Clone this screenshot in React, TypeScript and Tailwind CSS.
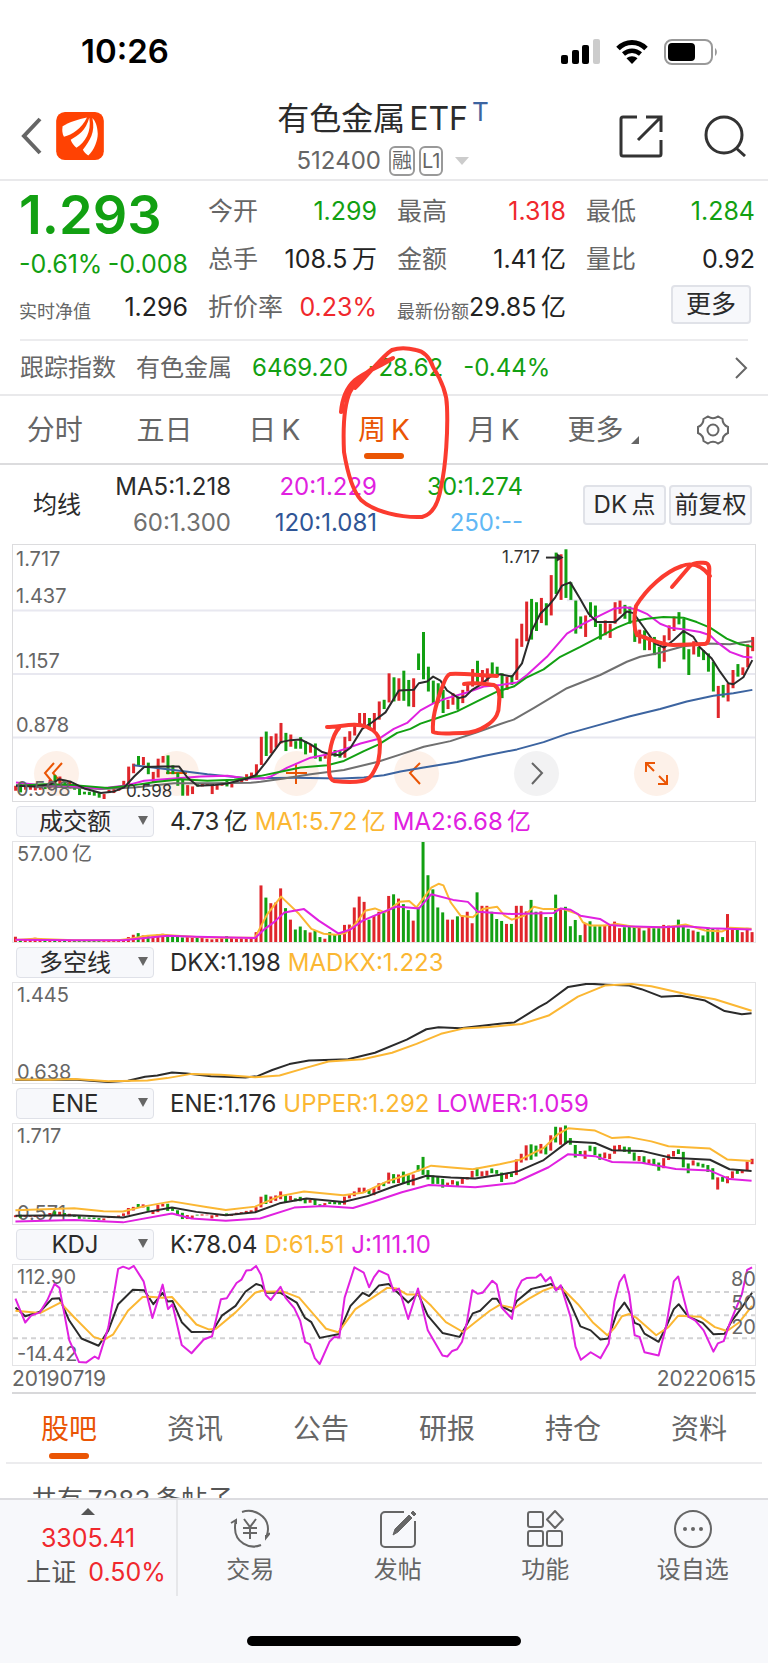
import type { ReactNode } from "react";
import clsx from "clsx";

const RED = "#e0262b";
const GREEN = "#12a012";
const BLACK = "#2b2b2b";
const YELLOW = "#fbb733";
const MAGENTA = "#e021e0";
const BLUE = "#3c64a0";
const GRAY = "#707070";

// One entry per week: direction, top and bottom of the bar.
const candles = `
r740-755 g735-760 r740-752 r738-752 r740-754 r738-752 g738-750 r722-748 g708-740 r712-738
g722-742 r728-748 g738-752 g745-768 g758-766 g758-768 g758-770 g762-776 r765-780 r752-762
r750-762 r742-755 r725-745 r682-735 r673-702 g650-680 r653-678 g670-705 r698-730 r658-715
r650-670 g648-705 g678-705 g700-740 g720-770 r738-770 r742-765 g735-742 r733-742 r735-740
r740-765 r735-752 r730-740 g725-742 r730-745 r720-730 r715-730 r705-725 r700-715 r675-710
r592-677 g576-650 r590-642 r582-625 r550-612 g580-635 r585-622 g605-628 g593-628 g605-645
r615-640 g612-658 g652-666 r643-658 g635-650 g632-652 g635-655 r592-655 r575-605 r550-588
r520-560 r520-560 g535-570 r520-580 r485-540 g480-508 r400-488 g412-485 r415-483 g392-483
g420-500 r415-502 g340-390 g275-418 g380-455 g422-490 g430-490 g450-520 r480-508 r460-495
g470-510 r450-490 r435-455 r387-440 g362-430 r390-430 r385-425 g367-405 g380-410 g400-475
r410-450 g405-435 r295-420 r250-320 r183-303 g175-298 g185-272 r172-248 g188-255 r103-225
g35-160 r40-178 g25-172 g125-178 g180-280 g228-265 r225-290 g185-230 g195-260 g250-298
r240-285 r250-293 r185-250 r180-220 g193-235 g198-250 g240-305 r268-310 g270-330 r295-330
g290-345 g320-385 r285-365 r255-300 r228-272 g215-252 g235-358 g327-405 r303-343 g320-350
g330-360 g340-395 g365-455 r438-535 g435-473 r430-485 r390-445 g372-410 r382-405 r312-382
r290-333`
  .trim()
  .split(/\s+/)
  .map((c) => {
    const [top, bottom] = c.slice(1).split("-").map(Number);
    return { color: c[0] === "r" ? RED : GREEN, top, bottom };
  });

const volumes = [
  414, 424, 423, 424, 417, 423, 423, 424, 424, 425, 427, 427, 427, 427, 427, 427, 427, 427, 427,
  427, 427, 426, 425, 415, 408, 403, 410, 412, 413, 406, 405, 411, 412, 414, 416, 415, 417, 417,
  418, 420, 422, 421, 418, 412, 418, 420, 419, 420, 418, 400, 258, 295, 312, 310, 267, 327, 362,
  392, 383, 394, 401, 395, 415, 420, 400, 408, 408, 378, 377, 325, 292, 308, 362, 350, 338, 342,
  290, 285, 298, 315, 333, 365, 325, 126, 227, 270, 325, 340, 362, 362, 352, 353, 338, 373, 279,
  320, 320, 338, 360, 366, 375, 375, 320, 320, 337, 302, 338, 337, 354, 354, 286, 330, 323, 382,
  363, 409, 373, 367, 382, 382, 378, 380, 368, 388, 385, 383, 384, 385, 395, 385, 388, 388, 378,
  380, 381, 362, 378, 390, 395, 399, 410, 388, 388, 392, 415, 345, 392, 392, 400, 387, 400,
];

type Series = { color: string; points: string };

const priceLines: Series[] = [
  {
    color: BLUE,
    points:
      "398,678 500,690 620,705 740,717 880,716 1020,718 1090,715 1150,708 1200,697 1270,685 1370,668 1450,650 1550,630 1630,608 1700,583 1800,555 1890,530 1980,508 2060,485 2140,468 2200,460 2257,450",
  },
  {
    color: GRAY,
    points:
      "45,738 300,750 400,745 520,732 640,732 750,731 780,728 850,718 930,705 1030,692 1080,680 1130,668 1210,642 1270,622 1350,605 1430,578 1500,553 1540,540 1600,505 1700,445 1800,405 1880,365 1920,350 1980,338 2050,318 2120,310 2190,312 2257,302",
  },
  {
    color: MAGENTA,
    points:
      "45,730 120,738 200,740 300,748 380,738 430,725 520,718 600,712 680,710 740,718 790,718 810,712 860,685 930,655 980,645 1030,630 1080,612 1135,598 1180,568 1220,550 1260,512 1300,490 1340,475 1400,458 1450,440 1500,435 1550,428 1580,405 1640,350 1700,280 1750,250 1800,225 1840,205 1875,200 1910,207 1940,220 1980,250 2010,262 2060,268 2100,275 2130,285 2150,305 2190,335 2230,350 2257,352",
  },
  {
    color: GREEN,
    points:
      "45,740 130,735 220,738 320,747 400,738 470,728 540,720 620,725 700,722 780,710 850,695 900,685 980,678 1030,665 1090,635 1135,615 1190,580 1230,568 1260,552 1320,532 1370,515 1430,485 1490,455 1540,440 1580,412 1630,388 1680,350 1740,320 1800,288 1850,262 1890,245 1940,235 1990,230 2050,232 2090,245 2130,262 2180,295 2220,312 2257,320",
  },
  {
    color: BLACK,
    points:
      "45,740 100,742 150,735 175,720 210,728 250,748 300,762 340,757 370,745 400,712 430,683 485,682 535,682 560,715 590,740 640,738 680,733 740,718 765,708 795,670 840,608 870,602 900,600 930,615 965,638 990,645 1018,648 1050,625 1085,568 1115,548 1155,518 1195,452 1240,450 1255,430 1280,425 1298,410 1320,422 1340,452 1375,475 1395,470 1415,450 1440,435 1470,410 1500,403 1535,410 1565,370 1595,270 1620,220 1645,195 1665,170 1685,135 1710,125 1740,175 1765,220 1790,245 1845,245 1880,213 1900,218 1930,260 1965,310 1992,322 2020,300 2050,272 2080,290 2100,322 2135,355 2160,395 2185,430 2200,433 2230,412 2257,360",
  },
];

const volumeLines: Series[] = [
  {
    color: YELLOW,
    points:
      "30,424 68,420 150,425 240,425 265,420 300,411 330,408 400,415 450,417 520,416 545,345 573,292 610,345 635,390 660,405 685,408 705,403 725,375 745,335 765,328 785,340 800,325 815,308 835,305 850,325 865,295 880,265 895,253 905,258 920,310 940,350 965,355 985,330 1015,323 1030,350 1045,362 1070,350 1090,323 1110,330 1150,330 1180,345 1190,370 1205,380 1235,380 1260,375 1300,385 1360,385 1400,377 1440,395 1475,398 1490,387 1535,390",
  },
  {
    color: MAGENTA,
    points:
      "30,423 150,425 250,425 340,411 400,414 520,418 540,390 560,368 580,340 620,330 650,365 690,404 715,392 740,365 775,343 810,322 855,328 880,285 925,302 955,308 975,338 1045,345 1130,342 1145,328 1165,332 1185,350 1225,360 1245,378 1280,382 1350,385 1400,382 1450,388 1535,392",
  },
];

const dkxLines: Series[] = [
  {
    color: BLACK,
    points:
      "30,423 150,422 220,430 260,426 295,414 320,410 350,401 380,404 430,412 500,416 525,412 555,393 590,375 630,364 710,360 765,340 830,300 870,268 895,262 940,265 1020,251 1050,247 1100,200 1115,188 1160,138 1200,128 1240,131 1285,134 1310,145 1350,168 1390,165 1440,180 1480,212 1515,222 1535,219",
  },
  {
    color: YELLOW,
    points:
      "30,422 100,423 150,421 220,428 300,425 340,418 390,405 450,408 520,415 570,410 620,388 670,367 740,360 800,340 850,313 900,282 945,266 1000,261 1065,252 1120,226 1180,168 1235,134 1290,129 1330,136 1400,160 1460,176 1535,211",
  },
];

const eneLines: Series[] = [
  {
    color: YELLOW,
    points:
      "30,393 150,387 210,396 250,397 290,382 350,366 420,383 460,392 520,382 570,350 620,336 700,347 740,340 790,305 840,280 880,257 915,262 965,268 1020,253 1060,240 1110,203 1140,160 1160,143 1215,150 1250,173 1285,170 1330,183 1365,198 1450,205 1485,238 1535,243",
  },
  {
    color: BLACK,
    points:
      "30,410 150,408 250,415 300,398 350,385 400,398 460,408 520,399 570,372 625,357 700,368 750,350 800,322 870,288 920,293 970,296 1020,285 1060,273 1110,240 1160,183 1215,188 1250,210 1310,212 1370,233 1450,239 1490,268 1535,273",
  },
  {
    color: MAGENTA,
    points:
      "30,427 150,423 250,430 350,403 390,418 460,425 530,418 600,385 660,380 720,386 760,368 820,338 875,316 970,323 1050,310 1120,262 1160,222 1215,228 1250,246 1310,248 1380,267 1450,272 1490,298 1535,303",
  },
];

const kdjLines: Series[] = [
  {
    color: BLACK,
    points:
      "30,230 50,257 80,243 105,203 120,202 140,270 165,325 200,347 220,300 240,220 270,176 293,177 312,220 331,185 341,212 351,210 370,275 390,305 432,304 452,255 480,225 500,182 522,158 533,163 542,185 572,185 605,215 622,262 635,275 652,323 690,312 715,225 740,185 753,195 773,163 793,158 833,215 853,187 873,255 903,308 938,320 950,290 965,248 980,240 1005,203 1014,203 1025,227 1045,243 1055,210 1085,173 1115,163 1125,158 1135,175 1147,168 1165,220 1185,288 1206,300 1226,328 1242,325 1260,245 1275,215 1288,245 1296,277 1306,283 1316,310 1345,335 1360,290 1376,235 1386,220 1405,257 1435,277 1457,312 1480,310 1495,270 1515,230 1536,185",
  },
  {
    color: YELLOW,
    points:
      "30,240 80,247 105,228 122,215 150,260 190,320 210,330 230,312 260,240 290,198 305,197 330,200 350,198 375,240 400,282 425,297 440,295 480,245 520,185 535,178 545,182 575,180 610,200 645,260 665,295 690,306 725,235 755,205 790,170 810,172 830,190 855,190 880,225 910,275 945,305 970,275 1000,240 1020,222 1050,232 1080,203 1110,178 1130,167 1150,175 1180,220 1210,275 1240,315 1255,292 1270,257 1285,250 1300,262 1340,315 1365,290 1385,255 1430,258 1460,290 1485,302 1510,275 1536,225",
  },
  {
    color: MAGENTA,
    points:
      "30,203 50,276 62,255 80,245 95,208 110,158 120,170 140,330 160,397 175,398 192,380 200,387 220,290 240,112 250,105 262,112 272,103 292,150 310,262 331,160 342,235 351,220 370,345 390,370 415,328 432,318 450,205 462,202 482,155 492,145 502,117 512,115 522,103 532,130 542,192 552,207 572,167 582,200 600,232 612,270 622,335 632,343 642,385 652,403 672,335 682,320 692,322 703,200 723,107 742,123 753,168 763,137 773,117 792,130 803,180 814,172 833,265 853,172 873,300 903,377 913,380 923,363 933,358 943,335 953,275 964,177 975,188 985,185 1005,148 1014,160 1024,230 1045,265 1055,177 1065,148 1075,140 1095,138 1104,128 1114,150 1124,137 1135,178 1145,162 1165,260 1175,350 1186,390 1206,367 1226,385 1243,340 1255,210 1265,152 1275,130 1285,190 1296,315 1306,320 1316,367 1345,377 1360,290 1376,150 1385,135 1396,200 1406,258 1420,270 1437,300 1457,365 1466,340 1478,333 1490,280 1515,190 1526,115 1536,107",
  },
];

function Lines({ series }: { series: Series[] }) {
  return (
    <>
      {series.map((s) => (
        <polyline
          key={s.color}
          points={s.points}
          fill="none"
          stroke={s.color}
          strokeWidth={2}
          strokeLinejoin="round"
          vectorEffect="non-scaling-stroke"
        />
      ))}
    </>
  );
}

function Bar({ x, top, bottom, color }: { x: number; top: number; bottom: number; color: string }) {
  return (
    <line
      x1={x}
      x2={x}
      y1={top}
      y2={bottom}
      stroke={color}
      strokeWidth={3}
      vectorEffect="non-scaling-stroke"
    />
  );
}

function Panel({
  name,
  options,
  values,
  viewBox,
  top,
  bottom,
  children,
}: {
  name: string;
  options: string[];
  values: { text: string; className: string }[];
  viewBox: string;
  top: string;
  bottom?: string;
  children: ReactNode;
}) {
  return (
    <section className="px-3">
      <div className="flex h-[39px] items-center pl-1">
        <div className="relative">
          <select
            aria-label={name}
            defaultValue={options[0]}
            className="block h-[31px] w-[138px] appearance-none rounded border border-[#dfe1e8] bg-[#f7f8fb] pr-5 text-center text-[24px] leading-[28px] text-[#2b2b2b] [text-align-last:center]"
          >
            {options.map((o) => (
              <option key={o}>{o}</option>
            ))}
          </select>
          <svg viewBox="0 0 10 9" className="pointer-events-none absolute right-[6px] top-[10px] h-[9px] w-[10px]">
            <path d="M0 0h10L5 9z" fill="#666" />
          </svg>
        </div>
        <p className="flex gap-[7px] pl-4 text-[24px] leading-[30px] whitespace-nowrap">
          {values.map((v) => (
            <span key={v.text} className={v.className}>
              {v.text}
            </span>
          ))}
        </p>
      </div>
      <div className="relative h-[102px] border border-[#e4e4e6]">
        <span className="absolute left-1 top-0 text-[20px] leading-[24px] text-[#666]">{top}</span>
        {bottom && (
          <span className="absolute bottom-0 left-1 text-[20px] leading-[22px] text-[#666]">{bottom}</span>
        )}
        <svg viewBox={viewBox} preserveAspectRatio="none" className="relative block h-full w-full">
          {children}
        </svg>
      </div>
    </section>
  );
}

function Quote({
  label,
  value,
  color = "text-[#222]",
  small = false,
}: {
  label: string;
  value: string;
  color?: string;
  small?: boolean;
}) {
  return (
    <div className="flex h-12 items-center justify-between whitespace-nowrap">
      <dt className={clsx("text-[#666]", small ? "pt-[6px] text-[18px]" : "text-[25px]")}>{label}</dt>
      <dd className={clsx("text-[25px]", color)}>{value}</dd>
    </div>
  );
}

function StatusBar() {
  return (
    <div className="flex h-24 items-center justify-between pl-[81px] pr-[50px] pt-[7px]">
      <span className="text-[33px] font-semibold text-black">10:26</span>
      <div className="flex items-center gap-[15px]">
        <svg viewBox="0 0 39 25" className="h-[25px] w-[39px]">
          <rect x="0" y="16" width="7" height="9" rx="2" />
          <rect x="11" y="11" width="7" height="14" rx="2" />
          <rect x="21" y="6" width="7" height="19" rx="2" />
          <rect x="32" y="0" width="7" height="25" rx="2" fill="#ccc" />
        </svg>
        <svg viewBox="0 0 34 25" className="h-[25px] w-[34px]">
          <path d="M3 9.500C11 1.500 23 1.500 31 9.500" fill="none" stroke="#000" strokeWidth="5" />
          <path d="M8.500 15C13.500 10.500 20.500 10.500 25.500 15" fill="none" stroke="#000" strokeWidth="4.500" />
          <path d="M17 25L11.500 19.300C14.500 16.500 19.500 16.500 22.500 19.300z" />
        </svg>
        <svg viewBox="0 0 54 26" className="h-[26px] w-[54px]">
          <rect x="1" y="1" width="47" height="24" rx="7" fill="none" stroke="#999" strokeWidth="2" />
          <rect x="4" y="4" width="27" height="18" rx="4" />
          <path d="M51 9c2.500 1.500 2.500 6.500 0 8z" fill="#999" />
        </svg>
      </div>
    </div>
  );
}

function Header() {
  return (
    <header className="grid h-[85px] grid-cols-[1fr_auto_1fr] items-center border-b-2 border-[#e9e9eb] pl-5 pr-[22px]">
      <div className="flex items-center gap-[14px] pb-1">
        <button aria-label="返回">
          <svg viewBox="0 0 22 38" className="h-[38px] w-[22px]" fill="none" stroke="#666" strokeWidth="4">
            <path d="M20 2L4 19l16 17" />
          </svg>
        </button>
        <svg viewBox="0 0 141 142" className="h-12 w-12">
          <rect width="141" height="142" rx="26" fill="#ff4203" />
          <g fill="#fff">
            <path d="M91 16C65 22 40 28 19 42c-2 12-1 22 4 31 24-7 52-23 68-57z" />
            <path d="M98 17C88 54 65 70 43 82c3 9 9 17 17 24 26-17 45-47 38-89z" />
            <path d="M107 18c10 42-8 68-28 94 4 7 9 13 16 17 18-18 28-45 28-65-1-22-7-38-16-46z" />
          </g>
        </svg>
      </div>
      <div className="flex flex-col items-center">
        <h1 className="flex items-start gap-1 text-[32px] leading-[42px] text-[#2b2b2b]">
          <span>有色金属</span>
          <span>
            ETF
          </span>
          <sup className="top-0 text-[26px] leading-[28px] text-[#3c64a0]">T</sup>
        </h1>
        <button className="mt-1 flex items-center gap-1 text-[#666]">
          <span className="text-[24px] leading-[34px]">512400</span>
          <span className="ml-1 h-[30px] rounded-md border-2 border-[#999] px-px text-[20px] leading-[26px]">融</span>
          <span className="h-[30px] rounded-md border-2 border-[#999] px-px text-[20px] leading-[26px]">L1</span>
          <svg viewBox="0 0 14 8" className="ml-2 h-2 w-[14px]">
            <path d="M0 0h14L7 8z" fill="#ccc" />
          </svg>
        </button>
      </div>
      <div className="flex items-center justify-end gap-[41px] pb-1">
        <button aria-label="分享">
          <svg viewBox="0 0 44 44" className="h-11 w-11" fill="none" stroke="#333" strokeWidth="3">
            <path d="M18 3H4a2 2 0 0 0-2 2v35a2 2 0 0 0 2 2h36a2 2 0 0 0 2-2V26M27 3h15v15M41 4L19 26" />
          </svg>
        </button>
        <button aria-label="搜索">
          <svg viewBox="0 0 42 42" className="h-[42px] w-[42px]" fill="none" stroke="#333" strokeWidth="3">
            <circle cx="20" cy="20" r="18" />
            <path d="M32 33l9 8" />
          </svg>
        </button>
      </div>
    </header>
  );
}

function Quotes() {
  return (
    <section className="border-b-2 border-[#e9e9eb]">
      <dl className="grid grid-cols-4 gap-x-5 pb-[7px] pl-[19px] pr-[13px] pt-[7px]">
        <div>
          <div className="flex h-[52px] items-center text-[54px] font-semibold text-[#12a012]">1.293</div>
          <div className="flex h-11 items-center justify-between pt-[6px] text-[25px] whitespace-nowrap text-[#12a012]">
            <span>-0.61%</span>
            <span>-0.008</span>
          </div>
          <Quote label="实时净值" value="1.296" small />
        </div>
        <div>
          <Quote label="今开" value="1.299" color="text-[#12a012]" />
          <Quote label="总手" value={"108.5\u2009万"} />
          <Quote label="折价率" value="0.23%" color="text-[#f0282d]" />
        </div>
        <div>
          <Quote label="最高" value="1.318" color="text-[#f0282d]" />
          <Quote label="金额" value={"1.41\u2009亿"} />
          <Quote label="最新份额" value={"29.85\u2009亿"} small />
        </div>
        <div>
          <Quote label="最低" value="1.284" color="text-[#12a012]" />
          <Quote label="量比" value="0.92" />
          <div className="flex h-12 items-center justify-end pb-2 pr-1">
            <button className="h-[39px] w-20 rounded border-2 border-[#e0e2e8] bg-[#f7f8fb] text-[25px] leading-[34px] text-[#2b2b2b]">
              更多
            </button>
          </div>
        </div>
      </dl>
      <a
        href="#index"
        className="mx-5 flex h-[55px] items-center border-t-2 border-[#ececee] text-[24px] whitespace-nowrap text-[#12a012]"
      >
        <span className="text-[#666]">跟踪指数</span>
        <span className="ml-5 text-[#666]">有色金属</span>
        <span className="ml-5">6469.20</span>
        <span className="ml-5">-28.62</span>
        <span className="ml-5">-0.44%</span>
        <svg viewBox="0 0 14 22" className="ml-auto h-[22px] w-[14px]" fill="none" stroke="#666" strokeWidth="2">
          <path d="M2 1l10 10L2 21" />
        </svg>
      </a>
    </section>
  );
}

function PeriodTabs() {
  const active = "周\u2009K";

  return (
    <nav className="grid h-[69px] grid-cols-7 border-b-2 border-[#dcdcde] text-[28px] text-[#666]">
      {["分时", "五日", "日\u2009K", active, "月\u2009K"].map((t) => (
        <button key={t} className={clsx("relative", t === active && "text-[#ea5504]")}>
          {t}
          {t === active && (
            <span className="absolute bottom-1 left-1/2 h-[6px] w-10 -translate-x-1/2 rounded-full bg-[#ea5504]" />
          )}
        </button>
      ))}
      <button className="flex items-center justify-center gap-2">
        更多
        <svg viewBox="0 0 8 8" className="mt-5 h-2 w-2">
          <path d="M8 0v8H0z" fill="#666" />
        </svg>
      </button>
      <button aria-label="设置" className="flex items-center justify-center">
        <svg viewBox="0 0 32 32" className="h-8 w-8" fill="none" stroke="#666" strokeWidth="2">
          <path d="M11 2.500C14 4.500 18 4.500 21 2.500L25.500 5C25.500 9 27.500 11.500 31 13V19C27.500 20.500 25.500 23 25.500 27L21 29.500C18 27.500 14 27.500 11 29.500L6.500 27C6.500 23 4.500 20.500 1 19V13C4.500 11.500 6.500 9 6.500 5z" />
          <circle cx="16" cy="16" r="5.500" />
        </svg>
      </button>
    </nav>
  );
}

function Averages() {
  return (
    <section className="flex h-[79px] items-center pl-[33px] pr-4 text-[24px] text-[#2b2b2b]">
      <span>均线</span>
      <div className="ml-1 grid grid-cols-[146px_146px_146px] text-right leading-9">
        <span>MA5:1.218</span>
        <span className="text-[#e021e0]">20:1.229</span>
        <span className="text-[#12a012]">30:1.274</span>
        <span className="text-[#707070]">60:1.300</span>
        <span className="text-[#2f5596]">120:1.081</span>
        <span className="text-[#62b8f5]">250:--</span>
      </div>
      <div className="ml-auto flex gap-[3px] leading-[34px] whitespace-nowrap">
        <button className="h-10 w-[83px] rounded border-2 border-[#e0e2e8] bg-[#f7f8fb]">{"DK\u2009点"}</button>
        <button className="h-10 w-[83px] rounded border-2 border-[#e0e2e8] bg-[#f7f8fb]">前复权</button>
      </div>
    </section>
  );
}

const chartButtons = [
  { label: "最早", d: "M20 12L11 22l9 11M28 12L19 22l9 11" },
  { label: "缩小", d: "M12 22h21" },
  { label: "放大", d: "M12 22h21M22 12v21" },
  { label: "向左", d: "M26 12L16 22l10 11" },
  { label: "向右", d: "M18 12l10 10L18 33" },
  { label: "全屏", d: "M12 21v-9h9M12 12l8 8M33 24v9h-9M33 33l-8-8" },
];

function PriceChart() {
  return (
    <section className="relative mx-3 h-[258px] border border-[#dcdcde]">
      <div className="absolute bottom-[5px] left-[21px] flex gap-[75px]">
        {chartButtons.map((b) => (
          <button
            key={b.label}
            aria-label={b.label}
            className={clsx("rounded-full", b.label === "向右" ? "bg-[#f2f2f3]" : "bg-[#fdf1e9]")}
          >
            <svg
              viewBox="0 0 45 45"
              className="h-[45px] w-[45px]"
              fill="none"
              stroke={b.label === "向右" ? "#666" : "#ea5504"}
              strokeWidth="2"
            >
              <path d={b.d} />
            </svg>
          </button>
        ))}
      </div>
      <svg
        viewBox="36 12 2229 774"
        preserveAspectRatio="none"
        className="pointer-events-none relative block h-full w-full"
      >
        <path
          d="M36 210H2265M36 402H2265M36 594H2265M1700 179H2265"
          stroke="#e8e8f0"
          strokeWidth={2}
          vectorEffect="non-scaling-stroke"
        />
        {candles.map((c, i) => (
          <Bar key={i} x={44 + i * 14.76} {...c} />
        ))}
        <Lines series={priceLines} />
        <path d="M1637 50H1680" stroke={BLACK} strokeWidth={6} />
        <path d="M1670 38l20 12-20 12z" fill={BLACK} />
      </svg>
      <div className="pointer-events-none absolute inset-0 text-[20px] leading-6 text-[#666]">
        <span className="absolute left-[3px] top-[2px]">1.717</span>
        <span className="absolute left-[3px] top-[39px]">1.437</span>
        <span className="absolute left-[3px] top-[104px]">1.157</span>
        <span className="absolute left-[3px] top-[168px]">0.878</span>
        <span className="absolute bottom-0 left-[3px]">0.598</span>
        <span className="absolute bottom-0 left-[113px] text-[17px] leading-5 text-[#333]">0.598</span>
        <span className="absolute right-[29%] top-0 text-[17px] text-[#333]">1.717</span>
      </div>
    </section>
  );
}

function InfoTabs() {
  return (
    <nav className="mx-[6px] grid h-[70px] grid-cols-6 border-b-2 border-[#ececee] text-[28px] text-[#666]">
      {["股吧", "资讯", "公告", "研报", "持仓", "资料"].map((t, i) => (
        <button key={t} className={clsx("relative pt-[2px]", i === 0 && "text-[#ea5504]")}>
          {t}
          {i === 0 && (
            <span className="absolute bottom-[3px] left-1/2 h-[6px] w-10 -translate-x-1/2 rounded-full bg-[#ea5504]" />
          )}
        </button>
      ))}
    </nav>
  );
}

const actions = [
  {
    label: "交易",
    icon: (
      <>
        <path d="M12 3C24-1 38 7 38 20c0 4-1 6-2 9M40 24l-4 5v-3M31 36C19 41 5 33 5 19c0-3 0-5 1-8M1 14l5-3v4" />
        <path d="M14 10l6 8 6-8M20 18v12M13 19h14M13 24h14" />
      </>
    ),
  },
  {
    label: "发帖",
    icon: (
      <>
        <path d="M26 3H7a4 4 0 0 0-4 4v27a4 4 0 0 0 4 4h26a4 4 0 0 0 4-4V12" />
        <path d="M15 26l2-6L31 6l3 3-14 14zM33 4l2-2 3 3-2 2z" fill="#666" strokeWidth="1" />
      </>
    ),
  },
  {
    label: "功能",
    icon: (
      <>
        <rect x="3" y="3" width="15" height="15" rx="2" />
        <rect x="3" y="22" width="15" height="15" rx="2" />
        <rect x="22" y="22" width="15" height="15" rx="2" />
        <path d="M30 2l8 8.500-8 8.500-8-8.500z" strokeLinejoin="round" />
      </>
    ),
  },
  {
    label: "设自选",
    icon: (
      <>
        <circle cx="20" cy="20" r="18" />
        <g fill="#666" stroke="none">
          <circle cx="12" cy="20" r="2" />
          <circle cx="20" cy="20" r="2" />
          <circle cx="28" cy="20" r="2" />
        </g>
      </>
    ),
  },
];

function BottomBar() {
  return (
    <footer className="border-t-2 border-[#dcdce0] bg-[#f7f8fb]">
      <div className="flex h-24">
        <button className="flex w-[178px] flex-col items-center border-r-2 border-[#e6e7ea] pt-2 text-[25px] leading-[34px] text-[#f0282d]">
          <svg viewBox="0 0 14 7" className="mb-[6px] h-[7px] w-[14px]">
            <path d="M0 7h14L7 0z" fill="#555" />
          </svg>
          <span>3305.41</span>
          <span className="flex gap-3 pl-4">
            <span className="text-[#555]">上证</span>0.50%
          </span>
        </button>
        <nav className="grid grow grid-cols-4">
          {actions.map((a) => (
            <button key={a.label} className="flex flex-col items-center pr-[3px] pt-[9px] text-[24px] leading-[34px] text-[#666]">
              <svg viewBox="0 0 40 40" className="mb-1 h-10 w-10" fill="none" stroke="#666" strokeWidth="2">
                {a.icon}
              </svg>
              {a.label}
            </button>
          ))}
        </nav>
      </div>
      <div className="flex h-[69px] justify-center pt-[40px]">
        <div className="h-[10px] w-[274px] rounded-full bg-black" />
      </div>
    </footer>
  );
}

// Hand-drawn marker strokes on top of the page.
function Marks() {
  return (
    <svg
      viewBox="0 0 768 1663"
      className="pointer-events-none absolute left-0 top-0 w-full"
      fill="none"
      stroke="#fb3b2f"
      strokeWidth="4"
      strokeLinecap="round"
      strokeLinejoin="round"
    >
      <path d="M341 412C342 400 346 388 355 380C366 371 380 367 393 358C377 364 360 374 350 392C344 405 343 430 344 452C347 470 352 490 361 500C374 512 402 518 422 517C434 514 439 500 441 487C446 465 448 430 447 407C447 393 440 378 433 367C430 357 423 351 416 350C408 348 398 348 392 350C380 358 366 378 355 388" />
      <path d="M327 727C340 727 355 722 367 727C374 730 380 736 380 744C380 752 379 758 378 763C373 774 370 780 362 781C352 783 342 782 334 781C329 779 329 773 329 767C328 755 332 735 339 728" />
      <path d="M497 676C480 676 465 673 450 674C445 676 444 684 441 690C436 705 432 718 433 732C440 735 452 733 463 733C472 733 480 730 486 726C497 719 499 712 499 704C500 696 500 688 494 685C484 684 473 682 464 684" />
      <path d="M672 587L690 566C695 561 702 563 706 563C711 565 709 571 709 577L709 623C709 634 710 645 704 644L673 645C661 645 648 638 637 635C633 627 634 616 636 606C647 588 665 572 682 566C692 562 702 566 710 576" />
    </svg>
  );
}

export default function App() {
  return (
    <div className="relative bg-white font-[Inter,'Noto_Sans_CJK_SC',sans-serif]">
      <StatusBar />
      <Header />
      <Quotes />
      <PeriodTabs />
      <Averages />
      <PriceChart />
      <Panel
        name="成交额指标"
        options={["成交额", "成交量"]}
        values={[
          { text: "4.73\u2009亿", className: "text-[#2b2b2b]" },
          { text: "MA1:5.72\u2009亿", className: "text-[#fbb733]" },
          { text: "MA2:6.68\u2009亿", className: "text-[#e021e0]" },
        ]}
        viewBox="25 126 1517 304"
        top={"57.00\u2009亿"}
      >
        {volumes.map((v, i) => (
          <Bar key={i} x={30 + i * 10.04} top={v} bottom={430} color={candles[i].color} />
        ))}
        <Lines series={volumeLines} />
      </Panel>
      <Panel
        name="多空线指标"
        options={["多空线"]}
        values={[
          { text: "DKX:1.198", className: "text-[#2b2b2b]" },
          { text: "MADKX:1.223", className: "text-[#fbb733]" },
        ]}
        viewBox="25 126 1517 307"
        top="1.445"
        bottom="0.638"
      >
        <Lines series={dkxLines} />
      </Panel>
      <Panel
        name="ENE指标"
        options={["ENE"]}
        values={[
          { text: "ENE:1.176", className: "text-[#2b2b2b]" },
          { text: "UPPER:1.292", className: "text-[#fbb733]" },
          { text: "LOWER:1.059", className: "text-[#e021e0]" },
        ]}
        viewBox="25 130 1517 305"
        top="1.717"
        bottom="0.571"
      >
        {candles.map((c, i) => (
          <Bar
            key={i}
            x={30 + i * 10.04}
            top={125 + c.top * 0.383}
            bottom={125 + c.bottom * 0.383}
            color={c.color}
          />
        ))}
        <Lines series={eneLines} />
      </Panel>
      <Panel
        name="KDJ指标"
        options={["KDJ"]}
        values={[
          { text: "K:78.04", className: "text-[#2b2b2b]" },
          { text: "D:61.51", className: "text-[#fbb733]" },
          { text: "J:111.10", className: "text-[#e021e0]" },
        ]}
        viewBox="25 100 1517 306"
        top="112.90"
        bottom="-14.42"
      >
        <path
          d="M25 183H1542M25 254H1542M25 324H1542"
          stroke="#d2d2d4"
          strokeWidth={2}
          strokeDasharray="5 4"
          vectorEffect="non-scaling-stroke"
        />
        <Lines series={kdjLines} />
      </Panel>
      <div className="relative mx-3 flex h-7 items-center justify-between border-b-2 border-[#d8d8da] text-[21px] text-[#666]">
        <span>20190719</span>
        <span>20220615</span>
        <div className="absolute bottom-[53px] right-0 flex flex-col text-right text-[20px] leading-6">
          <span>80</span>
          <span>50</span>
          <span>20</span>
        </div>
      </div>
      <InfoTabs />
      <div className="h-[34px] overflow-hidden pl-[31px] pt-[18px] text-[26px] leading-9 text-[#555]">
        {"共有\u20097283\u2009条帖子"}
      </div>
      <BottomBar />
      <Marks />
    </div>
  );
}
